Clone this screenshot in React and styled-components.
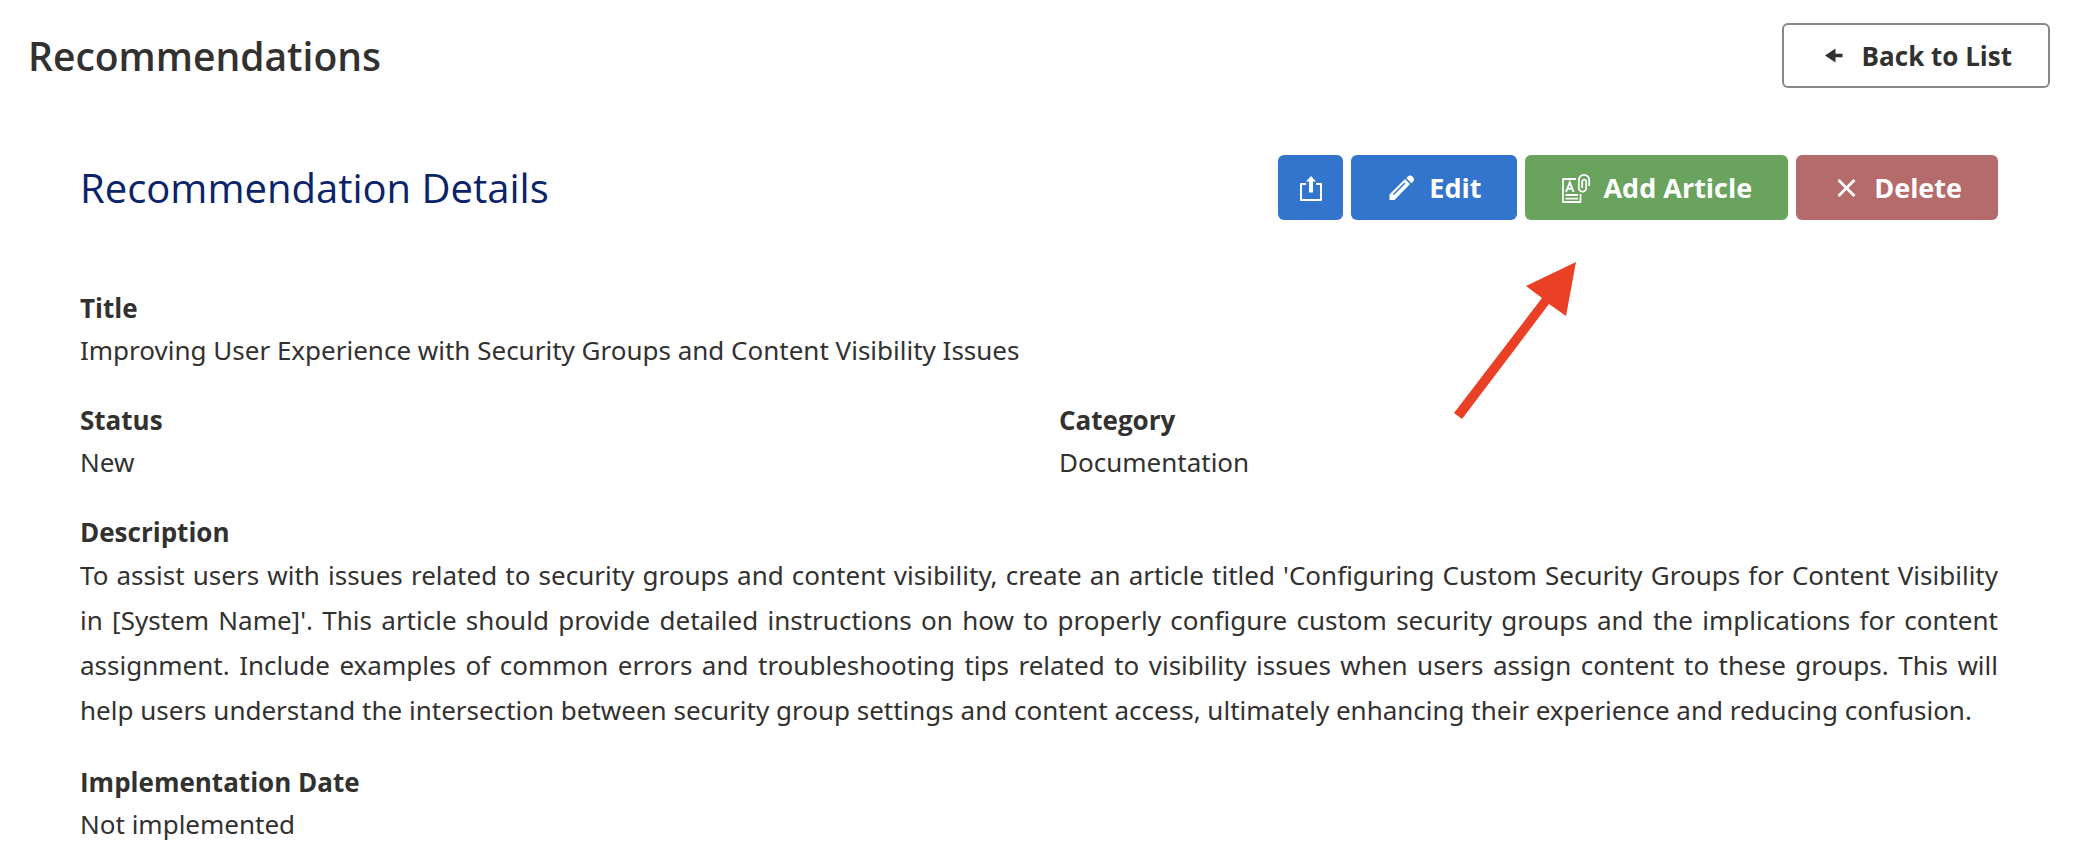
import React from "react";
import styled, { createGlobalStyle } from "styled-components";

const GlobalStyle = createGlobalStyle`
  * { box-sizing: border-box; }
  body {
    margin: 0;
    background: #fff;
    color: #323130;
    font-family: "Open Sans", "Noto Sans", sans-serif;
    font-size: 26px;
    line-height: 42px;
  }
`;

const Page = styled.main`
  padding: 23px 36px 0 28px;
`;

const Bar = styled.header`
  display: flex;
  align-items: center;
  justify-content: space-between;
`;

const PageTitle = styled.h1`
  margin: 0;
  font-size: 39px;
  font-weight: 600;
  line-height: 52px;
`;

const Panel = styled.section`
  padding: 67px 52px 0;
`;

const PanelTitle = styled.h2`
  margin: 0;
  color: #0b2369;
  font-size: 40px;
  font-weight: 400;
  line-height: 52px;
`;

const Actions = styled.div`
  display: flex;
  gap: 8px;
`;

const tones = {
  primary: "#3375cd",
  success: "#69a35e",
  danger: "#b56b6b",
};

const Button = styled.button`
  display: flex;
  align-items: center;
  justify-content: center;
  gap: 14px;
  min-width: 65px;
  height: 65px;
  padding: 0 ${(p) => (p.$square ? "18px" : "36px")};
  border: ${(p) => (p.$tone ? "0" : "2px solid #8a8886")};
  border-radius: 6px;
  background: ${(p) => (p.$tone ? tones[p.$tone] : "#fff")};
  color: ${(p) => (p.$tone ? "#fff" : "#323130")};
  font: inherit;
  font-size: ${(p) => (p.$tone ? "27px" : "26px")};
  font-weight: 700;
  white-space: nowrap;
  cursor: pointer;
`;

const Icon = styled.svg`
  flex: none;
  width: 28px;
  height: 28px;
  fill: none;
  stroke: currentColor;
  overflow: visible;
`;

const Details = styled.dl`
  display: grid;
  grid-template-columns: 1fr 1fr;
  gap: 28px 40px;
  margin: 67px 0 0;
`;

const Field = styled.div`
  grid-column: ${(p) => (p.$wide ? "1 / -1" : "auto")};
`;

const Label = styled.dt`
  font-weight: 700;
`;

const Value = styled.dd`
  margin: 0;
  font-family: "Noto Sans", "Open Sans", sans-serif;
  line-height: ${(p) => (p.$prose ? "45px" : "42px")};
  text-align: ${(p) => (p.$prose ? "justify" : "left")};
`;

const Pointer = styled.svg`
  position: absolute;
  top: 260px;
  right: 508px;
  width: 124px;
  height: 160px;
  pointer-events: none;
`;

const BackIcon = () => (
  <Icon viewBox="0 0 28 28" aria-hidden="true">
    <path d="M5 13.5 15.5 6.5V11.7H22.5V15.3H15.5V20.5Z" fill="currentColor" stroke="none" />
  </Icon>
);

const ShareIcon = () => (
  <Icon viewBox="0 0 28 28" aria-hidden="true">
    <path d="M9 10H4V26H24V10H19" strokeWidth="2" strokeLinejoin="round" />
    <path d="M14 2 19 7.5H16V18.5H12V7.5H9Z" fill="currentColor" stroke="none" />
  </Icon>
);

const EditIcon = () => (
  <Icon viewBox="0 0 28 28" aria-hidden="true">
    <path d="M2.5 20.5 18 5 23 10 7.5 26H2.5Z" fill="currentColor" stroke="none" />
    <path d="M19.3 4 20.5 2.8A3.7 3.7 0 0 1 25.8 8L24.5 9.2Z" fill="currentColor" stroke="none" />
    <path d="M6.5 20.5 18 9" stroke="#3375cd" strokeWidth="1.4" />
  </Icon>
);

const ArticleIcon = () => (
  <Icon viewBox="0 0 28 28" aria-hidden="true">
    <path d="M15 5H2V28H19.5V20" strokeWidth="1.8" strokeLinejoin="round" />
    <path d="M5 18 8.8 8.5 12.6 18M6.5 14.8H11" strokeWidth="2" />
    <path d="M4.5 21H17M4.5 24.7H17" strokeWidth="1.8" />
    <path
      d="M28.2 12V6A5.2 5.2 0 0 0 17.8 6V14A3.7 3.7 0 0 0 25.2 14V7A2.1 2.1 0 0 0 21.2 7V14"
      strokeWidth="1.8"
    />
  </Icon>
);

const DeleteIcon = () => (
  <Icon viewBox="0 0 28 28" aria-hidden="true">
    <path d="M6.5 6 22.5 22M22.5 6 6.5 22" strokeWidth="2.8" />
  </Icon>
);

const fields = [
  { label: "Title", value: "Improving User Experience with Security Groups and Content Visibility Issues", wide: true },
  { label: "Status", value: "New" },
  { label: "Category", value: "Documentation" },
  {
    label: "Description",
    value:
      "To assist users with issues related to security groups and content visibility, create an article titled 'Configuring Custom Security Groups for Content Visibility in\u00a0[System Name]'. This article should provide detailed instructions on how to properly configure custom security groups and the implications for content assignment. Include examples of common errors and troubleshooting tips related to visibility issues when users assign content to these groups. This will help users understand the intersection between security group settings and content access, ultimately enhancing their experience and reducing confusion.",
    wide: true,
    prose: true,
  },
  { label: "Implementation Date", value: "Not implemented", wide: true },
];

export default function App() {
  return (
    <Page>
      <GlobalStyle />
      <Bar>
        <PageTitle>Recommendations</PageTitle>
        <Button type="button">
          <BackIcon />
          Back to List
        </Button>
      </Bar>
      <Panel>
        <Bar>
          <PanelTitle>Recommendation Details</PanelTitle>
          <Actions>
            <Button type="button" $tone="primary" $square aria-label="Share">
              <ShareIcon />
            </Button>
            <Button type="button" $tone="primary">
              <EditIcon />
              Edit
            </Button>
            <Button type="button" $tone="success">
              <ArticleIcon />
              Add Article
            </Button>
            <Button type="button" $tone="danger">
              <DeleteIcon />
              Delete
            </Button>
          </Actions>
        </Bar>
        <Details>
          {fields.map((f) => (
            <Field key={f.label} $wide={f.wide}>
              <Label>{f.label}</Label>
              <Value $prose={f.prose}>{f.value}</Value>
            </Field>
          ))}
        </Details>
      </Panel>
      <Pointer viewBox="0 0 124 160" aria-hidden="true">
        <path d="M122 2 72 26 88 38 0 153 8 159 95 44 112 56Z" fill="#e94026" />
      </Pointer>
    </Page>
  );
}
